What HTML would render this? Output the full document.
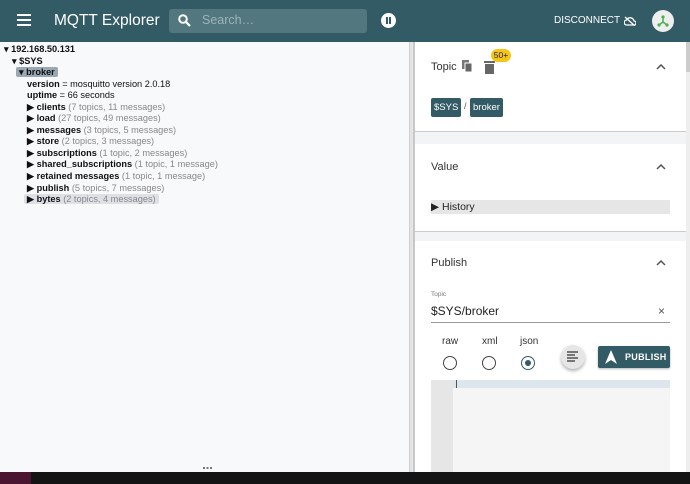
<!DOCTYPE html>
<html><head><meta charset="utf-8"><style>
*{box-sizing:border-box;margin:0;padding:0}
body{width:690px;height:484px;overflow:hidden;font-family:"Liberation Sans",sans-serif;background:#f7f8fa;position:relative}
.hdr{position:absolute;left:0;top:0;width:690px;height:42px;background:#335b66;color:#fff}
.tree{position:absolute;left:0;top:43px;width:409px;height:429px;background:#f8f9fb;font-size:9.2px;color:#111}
.row{height:11.55px;line-height:11.55px;white-space:nowrap}
.row b{font-weight:bold}
.g{color:#888}
.div{position:absolute;left:409px;top:42px;width:6px;height:430px;background:#e4e4e4;border-left:1px solid #cfcfcf;border-right:2px solid #c8c8c8}
.right{position:absolute;left:415px;top:42px;width:271px;height:430px;background:#f3f4f6}
.card{position:absolute;left:0;width:271px;background:#fff}
.title{position:absolute;left:16px;font-size:11px;color:#333}
.chev{position:absolute;left:241px}
.sb{position:absolute;left:686px;top:42px;width:4px;height:430px;background:#eee}
.task{position:absolute;left:0;top:472px;width:690px;height:12px;background:#141414}
</style></head><body>
<div class="hdr">
<svg style="position:absolute;left:17px;top:14px" width="14" height="12"><rect y="0" width="14" height="2" fill="#fff"/><rect y="5" width="14" height="2" fill="#fff"/><rect y="10" width="14" height="2" fill="#fff"/></svg>
<div style="position:absolute;left:54px;top:12px;font-size:15.5px">MQTT Explorer</div>
<div style="position:absolute;left:169px;top:9px;width:198px;height:24px;background:#52777f;border-radius:3px"></div>
<svg style="position:absolute;left:178px;top:14px" width="13" height="13"><circle cx="5" cy="5" r="3.8" stroke="#fff" stroke-width="2" fill="none"/><line x1="8" y1="8" x2="12" y2="12" stroke="#fff" stroke-width="2.2"/></svg>
<div style="position:absolute;left:202px;top:13px;font-size:12.5px;color:#9db3b8">Search…</div>
<div style="position:absolute;left:381px;top:13px;width:15px;height:15px;border-radius:50%;background:#fff"></div>
<div style="position:absolute;left:386px;top:17px;width:1.6px;height:7px;background:#335b66;box-shadow:3px 0 0 #335b66"></div>
<div style="position:absolute;left:554px;top:15px;font-size:10px">DISCONNECT</div>
<svg style="position:absolute;left:624px;top:16px" width="12" height="10"><path d="M3 9h7a2 2 0 0 0 0-4 4 4 0 0 0-7.5-1A2.5 2.5 0 0 0 3 9z" stroke="#fff" stroke-width="1.3" fill="none"/><line x1="1" y1="1" x2="11" y2="10" stroke="#fff" stroke-width="1.3"/></svg>
<div style="position:absolute;left:652px;top:10px;width:22px;height:22px;border-radius:50%;background:#eee"></div>
<svg style="position:absolute;left:656px;top:14px" width="14" height="14"><path d="M7 3v5M7 8l-4 3M7 8l4 3" stroke="#4caf50" stroke-width="1.5"/><circle cx="7" cy="3" r="1.6" fill="#4caf50"/><circle cx="3" cy="11" r="1.6" fill="#4caf50"/><circle cx="11" cy="11" r="1.6" fill="#4caf50"/></svg>
</div>
<div class="tree">
<div style="padding-top:1px">
<div class="row" style="padding-left:4px"><b>▾ 192.168.50.131</b></div>
<div class="row" style="padding-left:12px"><b>▾ $SYS</b></div>
<div class="row" style="padding-left:16px"><span style="background:#9aa8b3;border-radius:2px;padding:0 3px 0 3px"><b>▾ broker</b></span></div>
<div class="row" style="padding-left:27px"><b>version</b> = mosquitto version 2.0.18</div>
<div class="row" style="padding-left:27px"><b>uptime</b> = 66 seconds</div>
<div class="row" style="padding-left:27px"><b>▶ clients</b> <span class="g">(7 topics, 11 messages)</span></div>
<div class="row" style="padding-left:27px"><b>▶ load</b> <span class="g">(27 topics, 49 messages)</span></div>
<div class="row" style="padding-left:27px"><b>▶ messages</b> <span class="g">(3 topics, 5 messages)</span></div>
<div class="row" style="padding-left:27px"><b>▶ store</b> <span class="g">(2 topics, 3 messages)</span></div>
<div class="row" style="padding-left:27px"><b>▶ subscriptions</b> <span class="g">(1 topic, 2 messages)</span></div>
<div class="row" style="padding-left:27px"><b>▶ shared_subscriptions</b> <span class="g">(1 topic, 1 message)</span></div>
<div class="row" style="padding-left:27px"><b>▶ retained messages</b> <span class="g">(1 topic, 1 message)</span></div>
<div class="row" style="padding-left:27px"><b>▶ publish</b> <span class="g">(5 topics, 7 messages)</span></div>
<div class="row" style="padding-left:24px"><span style="background:#dde1e6;border-radius:2px;padding:0 3px"><b>▶ bytes</b> <span class="g">(2 topics, 4 messages)</span></span></div>
</div>
<div style="position:absolute;left:203px;top:424px;width:9px;height:2px;background:repeating-linear-gradient(90deg,#777 0 2px,transparent 2px 3.5px)"></div>
</div>
<div class="div"></div>
<div class="right">
<div class="card" style="top:0;height:90px;border-bottom:1px solid #ccc">
<div class="title" style="top:19px">Topic</div>
<svg style="position:absolute;left:47px;top:18px" width="12" height="13"><rect x="0" y="0" width="7" height="9" fill="#777"/><rect x="3" y="3" width="7" height="9" fill="#666" stroke="#fff" stroke-width="1"/></svg>
<svg style="position:absolute;left:69px;top:18px" width="11" height="14"><rect x="0" y="1" width="11" height="2" fill="#666"/><rect x="1" y="4" width="9" height="10" fill="#666"/></svg>
<div style="position:absolute;left:76px;top:7px;width:20px;height:13px;border-radius:7px;background:#f5c518;font-size:8.5px;text-align:center;line-height:13px;color:#222">50+</div>
<svg class="chev" style="top:22px" width="10" height="6"><path d="M1 5l4-4 4 4" stroke="#555" stroke-width="1.5" fill="none"/></svg>
<div style="position:absolute;left:16px;top:56px;height:19px;padding:0 3px;background:#335b66;color:#fff;font-size:9.5px;line-height:19px;border-radius:2px">$SYS</div>
<div style="position:absolute;left:49px;top:59px;font-size:9px;color:#555">/</div>
<div style="position:absolute;left:55px;top:56px;height:19px;padding:0 3px;background:#335b66;color:#fff;font-size:9.5px;line-height:19px;border-radius:2px">broker</div>
</div>
<div class="card" style="top:102px;height:88px;border-bottom:1px solid #ccc">
<div class="title" style="top:17px">Value</div>
<svg class="chev" style="top:20px" width="10" height="6"><path d="M1 5l4-4 4 4" stroke="#555" stroke-width="1.5" fill="none"/></svg>
<div style="position:absolute;left:16px;top:56px;width:239px;height:14px;background:#e6e6e6;font-size:10.5px;line-height:14px;color:#222">▶ History</div>
</div>
<div class="card" style="top:199px;height:231px">
<div class="title" style="top:16px">Publish</div>
<svg class="chev" style="top:19px" width="10" height="6"><path d="M1 5l4-4 4 4" stroke="#555" stroke-width="1.5" fill="none"/></svg>
<div style="position:absolute;left:16px;top:50px;font-size:6.5px;color:#777">Topic</div>
<div style="position:absolute;left:16px;top:63px;font-size:12px;color:#222">$SYS/broker</div>
<div style="position:absolute;left:243px;top:63px;font-size:12px;color:#555">×</div>
<div style="position:absolute;left:16px;top:81px;width:239px;height:1px;background:#999"></div>
<div style="position:absolute;left:27px;top:95px;font-size:10px;color:#333">raw</div>
<div style="position:absolute;left:67px;top:95px;font-size:10px;color:#333">xml</div>
<div style="position:absolute;left:105px;top:95px;font-size:10px;color:#333">json</div>
<div style="position:absolute;left:28px;top:115px;width:14px;height:14px;border:1.5px solid #444;border-radius:50%"></div>
<div style="position:absolute;left:67px;top:115px;width:14px;height:14px;border:1.5px solid #444;border-radius:50%"></div>
<div style="position:absolute;left:106px;top:115px;width:14px;height:14px;border:1.5px solid #335b66;border-radius:50%"></div>
<div style="position:absolute;left:110px;top:119px;width:6px;height:6px;background:#335b66;border-radius:50%"></div>
<div style="position:absolute;left:146px;top:104px;width:24px;height:24px;border-radius:50%;background:#e6e6e6;box-shadow:0 2px 3px rgba(0,0,0,.3)"></div>
<svg style="position:absolute;left:152px;top:110px" width="12" height="11"><path d="M0 1h11M0 4h8M0 7h11M0 10h8" stroke="#333" stroke-width="1.3"/></svg>
<div style="position:absolute;left:183px;top:105px;width:72px;height:22px;background:#335b66;border-radius:2px;box-shadow:0 1px 2px rgba(0,0,0,.3)"></div>
<svg style="position:absolute;left:189px;top:109px" width="14" height="14"><path d="M7 0L13 14 7 10 1 14z" fill="#fff"/></svg>
<div style="position:absolute;left:210px;top:111px;font-size:9px;color:#fff;font-weight:bold;letter-spacing:.3px">PUBLISH</div>
<div style="position:absolute;left:16px;top:139px;width:239px;height:92px;background:#f5f5f5"></div>
<div style="position:absolute;left:16px;top:139px;width:22px;height:92px;background:#e6e6e6"></div>
<div style="position:absolute;left:38px;top:139px;width:217px;height:8px;background:#dde6ef"></div>
<div style="position:absolute;left:41px;top:139px;width:1px;height:8px;background:#555"></div>
</div>
</div>
<div class="sb"><div style="width:4px;height:30px;background:#ccc;margin-top:0"></div></div>
<div class="task"><div style="width:31px;height:12px;background:#4a1530"></div></div>
</body></html>
